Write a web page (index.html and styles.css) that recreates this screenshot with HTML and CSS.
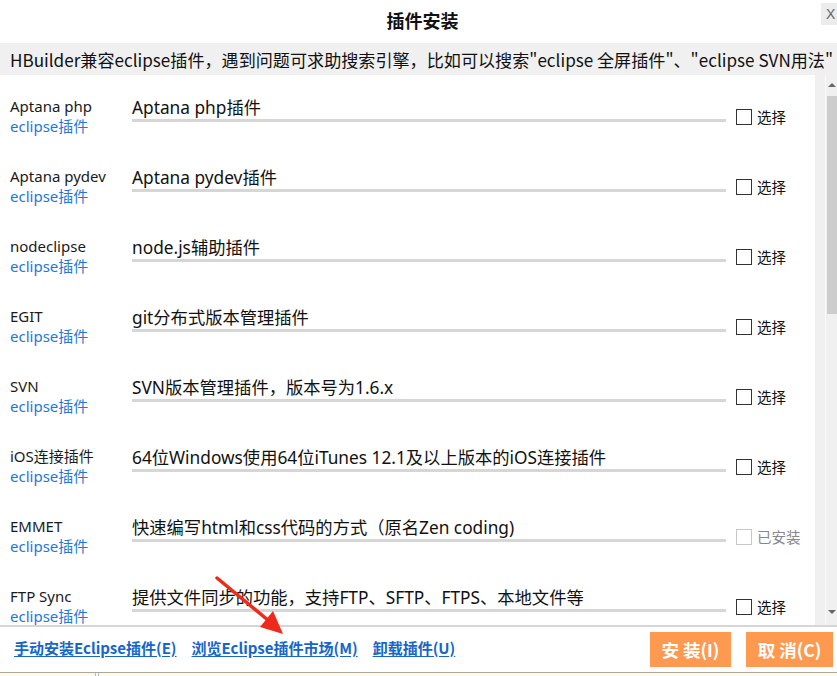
FILE: index.html
```html
<!DOCTYPE html>
<html lang="zh-CN">
<head>
<meta charset="utf-8">
<title>插件安装</title>
<link rel="stylesheet" href="styles.css">
</head>
<body>
<div class="dialog">
  <div class="titlebar">
    <div class="title">插件安装</div>
    <div class="close">X</div>
  </div>
  <div class="notice">HBuilder兼容eclipse插件，遇到问题可求助搜索引擎，比如可以搜索"eclipse 全屏插件"、"eclipse SVN用法"</div>
  <div class="main">
    <div class="list">
      <div class="row">
        <div class="name"><div class="pname">Aptana php</div><div class="ptype">eclipse插件</div></div>
        <div class="desc"><div class="dtext">Aptana php插件</div></div>
        <label class="check"><span class="box"></span><span>选择</span></label>
      </div>
      <div class="row">
        <div class="name"><div class="pname">Aptana pydev</div><div class="ptype">eclipse插件</div></div>
        <div class="desc"><div class="dtext">Aptana pydev插件</div></div>
        <label class="check"><span class="box"></span><span>选择</span></label>
      </div>
      <div class="row">
        <div class="name"><div class="pname">nodeclipse</div><div class="ptype">eclipse插件</div></div>
        <div class="desc"><div class="dtext">node.js辅助插件</div></div>
        <label class="check"><span class="box"></span><span>选择</span></label>
      </div>
      <div class="row">
        <div class="name"><div class="pname">EGIT</div><div class="ptype">eclipse插件</div></div>
        <div class="desc"><div class="dtext">git分布式版本管理插件</div></div>
        <label class="check"><span class="box"></span><span>选择</span></label>
      </div>
      <div class="row">
        <div class="name"><div class="pname">SVN</div><div class="ptype">eclipse插件</div></div>
        <div class="desc"><div class="dtext">SVN版本管理插件，版本号为1.6.x</div></div>
        <label class="check"><span class="box"></span><span>选择</span></label>
      </div>
      <div class="row">
        <div class="name"><div class="pname">iOS连接插件</div><div class="ptype">eclipse插件</div></div>
        <div class="desc"><div class="dtext">64位Windows使用64位iTunes 12.1及以上版本的iOS连接插件</div></div>
        <label class="check"><span class="box"></span><span>选择</span></label>
      </div>
      <div class="row">
        <div class="name"><div class="pname">EMMET</div><div class="ptype">eclipse插件</div></div>
        <div class="desc"><div class="dtext">快速编写html和css代码的方式（原名Zen coding)</div></div>
        <label class="check disabled"><span class="box"></span><span>已安装</span></label>
      </div>
      <div class="row">
        <div class="name"><div class="pname">FTP Sync</div><div class="ptype">eclipse插件</div></div>
        <div class="desc"><div class="dtext">提供文件同步的功能，支持FTP、SFTP、FTPS、本地文件等</div></div>
        <label class="check"><span class="box"></span><span>选择</span></label>
      </div>
    </div>
    <div class="gutter"></div>
    <div class="scrollbar">
      <div class="arrow up"></div>
      <div class="thumb"></div>
      <div class="track"></div>
      <div class="arrow down"></div>
    </div>
  </div>
  <div class="footer">
    <div class="links">
      <a class="link" href="#">手动安装Eclipse插件(E)</a>
      <a class="link" href="#">浏览Eclipse插件市场(M)</a>
      <a class="link" href="#">卸载插件(U)</a>
    </div>
    <div class="buttons">
      <button class="btn install">安 装(I)</button>
      <button class="btn cancel">取 消(C)</button>
    </div>
  </div>
  <div class="statusline"><span class="tick"></span></div>
  <svg class="pointer" width="837" height="676" viewBox="0 0 837 676">
    <path d="M217 578 L269 621" stroke="#ee2a1c" stroke-width="3.5" stroke-linecap="round"/>
    <polygon points="283,634 260,627 273,611" fill="#ee2a1c"/>
  </svg>
</div>
</body>
</html>
```
FILE: styles.css
```css
* { box-sizing: border-box; }
html, body { margin: 0; padding: 0; background: #fff; }
body {
  width: 837px;
  height: 676px;
  overflow: hidden;
  font-family: "Noto Sans", "Noto Sans CJK SC", sans-serif;
  color: #111;
}
.dialog {
  position: relative;
  width: 837px;
  height: 676px;
  display: flex;
  flex-direction: column;
}
.titlebar {
  position: relative;
  height: 43px;
  display: flex;
  align-items: center;
  justify-content: center;
  padding-bottom: 2px;
  background: #fff;
}
.title {
  font-family: "Noto Sans CJK SC", sans-serif;
  font-weight: 700;
  font-size: 18px;
  margin-left: 8px;
  color: #111;
}
.close {
  position: absolute;
  right: 0;
  top: 3px;
  width: 16px;
  height: 22px;
  background: #ececec;
  color: #666;
  font-size: 14px;
  line-height: 22px;
  padding-left: 5px;
  font-family: "Liberation Sans", sans-serif;
}
.notice {
  height: 33px;
  background: #f0f0f0;
  font-family: "Noto Sans CJK SC", sans-serif;
  font-size: 17.1px;
  line-height: 33px;
  padding-left: 10px;
  white-space: nowrap;
  overflow: hidden;
  color: #111;
}
.main {
  height: 550px;
  display: flex;
}
.list {
  width: 815px;
  background: #fff;
  overflow: hidden;
}
.row {
  height: 70px;
  display: flex;
  align-items: flex-start;
}
.name {
  width: 132px;
  padding: 21px 0 0 10px;
  font-size: 15px;
  line-height: 20px;
}
.pname { color: #1a1a1a; white-space: nowrap; }
.ptype { color: #2277dd; }
.desc {
  width: 594px;
  padding-top: 21px;
}
.dtext {
  font-family: "Noto Sans", "Noto Sans CJK SC", sans-serif;
  font-size: 17.3px;
  line-height: 23px;
  height: 26px;
  border-bottom: 3px solid #d6d6d6;
  white-space: nowrap;
  color: #111;
}
.check {
  display: flex;
  align-items: center;
  margin: 31px 0 0 10px;
  font-family: "Noto Sans CJK SC", sans-serif;
  font-size: 14.5px;
  color: #111;
  gap: 5px;
}
.box {
  width: 16px;
  height: 16px;
  border: 1.5px solid #333;
  background: #fff;
}
.check.disabled { color: #888; }
.check.disabled .box { border-color: #c8c8c8; }
.gutter {
  width: 11px;
  background: #f0f0f0;
  border-right: 1px solid #fafafa;
}
.scrollbar {
  width: 11px;
  background: #f0f0f0;
  display: flex;
  flex-direction: column;
}
.arrow { height: 21px; position: relative; }
.arrow.up::after {
  content: "";
  position: absolute;
  left: 2px;
  top: 8px;
  border-left: 4px solid transparent;
  border-right: 4px solid transparent;
  border-bottom: 4px solid #666;
}
.arrow.down::after {
  content: "";
  position: absolute;
  left: 2px;
  top: 6px;
  border-left: 4px solid transparent;
  border-right: 4px solid transparent;
  border-top: 4px solid #666;
}
.thumb {
  height: 218px;
  margin-left: 1px;
  background: #cdcdcd;
}
.track { flex: 1; }
.footer {
  height: 47px;
  border-top: 2px solid #d6d6d6;
  display: flex;
  align-items: center;
  justify-content: space-between;
  padding: 0 4px 0 14px;
}
.links {
  display: flex;
  gap: 15px;
  padding-bottom: 5px;
}
.link {
  font-family: "Noto Sans CJK SC", sans-serif;
  font-weight: 700;
  font-size: 15px;
  color: #1566c9;
  text-decoration: underline;
  text-underline-offset: 2px;
}
.buttons {
  display: flex;
  gap: 15px;
}
.btn {
  height: 35px;
  border: none;
  background: #fe9a4f;
  color: #fff;
  font-family: "Noto Sans CJK SC", sans-serif;
  font-weight: 700;
  font-size: 17.5px;
  padding: 0;
  white-space: pre;
}
.btn.install { width: 81px; }
.btn.cancel { width: 87px; }
.statusline {
  height: 4px;
  border-top: 1px solid #a8a8a8;
  background: #fffbe3;
  position: relative;
}
.tick {
  display: block;
  margin-left: 95px;
  width: 4px;
  height: 3px;
  border-left: 1px solid #bbb;
  border-right: 1px solid #bbb;
}
.pointer {
  position: absolute;
  left: 0;
  top: 0;
  pointer-events: none;
}
```
